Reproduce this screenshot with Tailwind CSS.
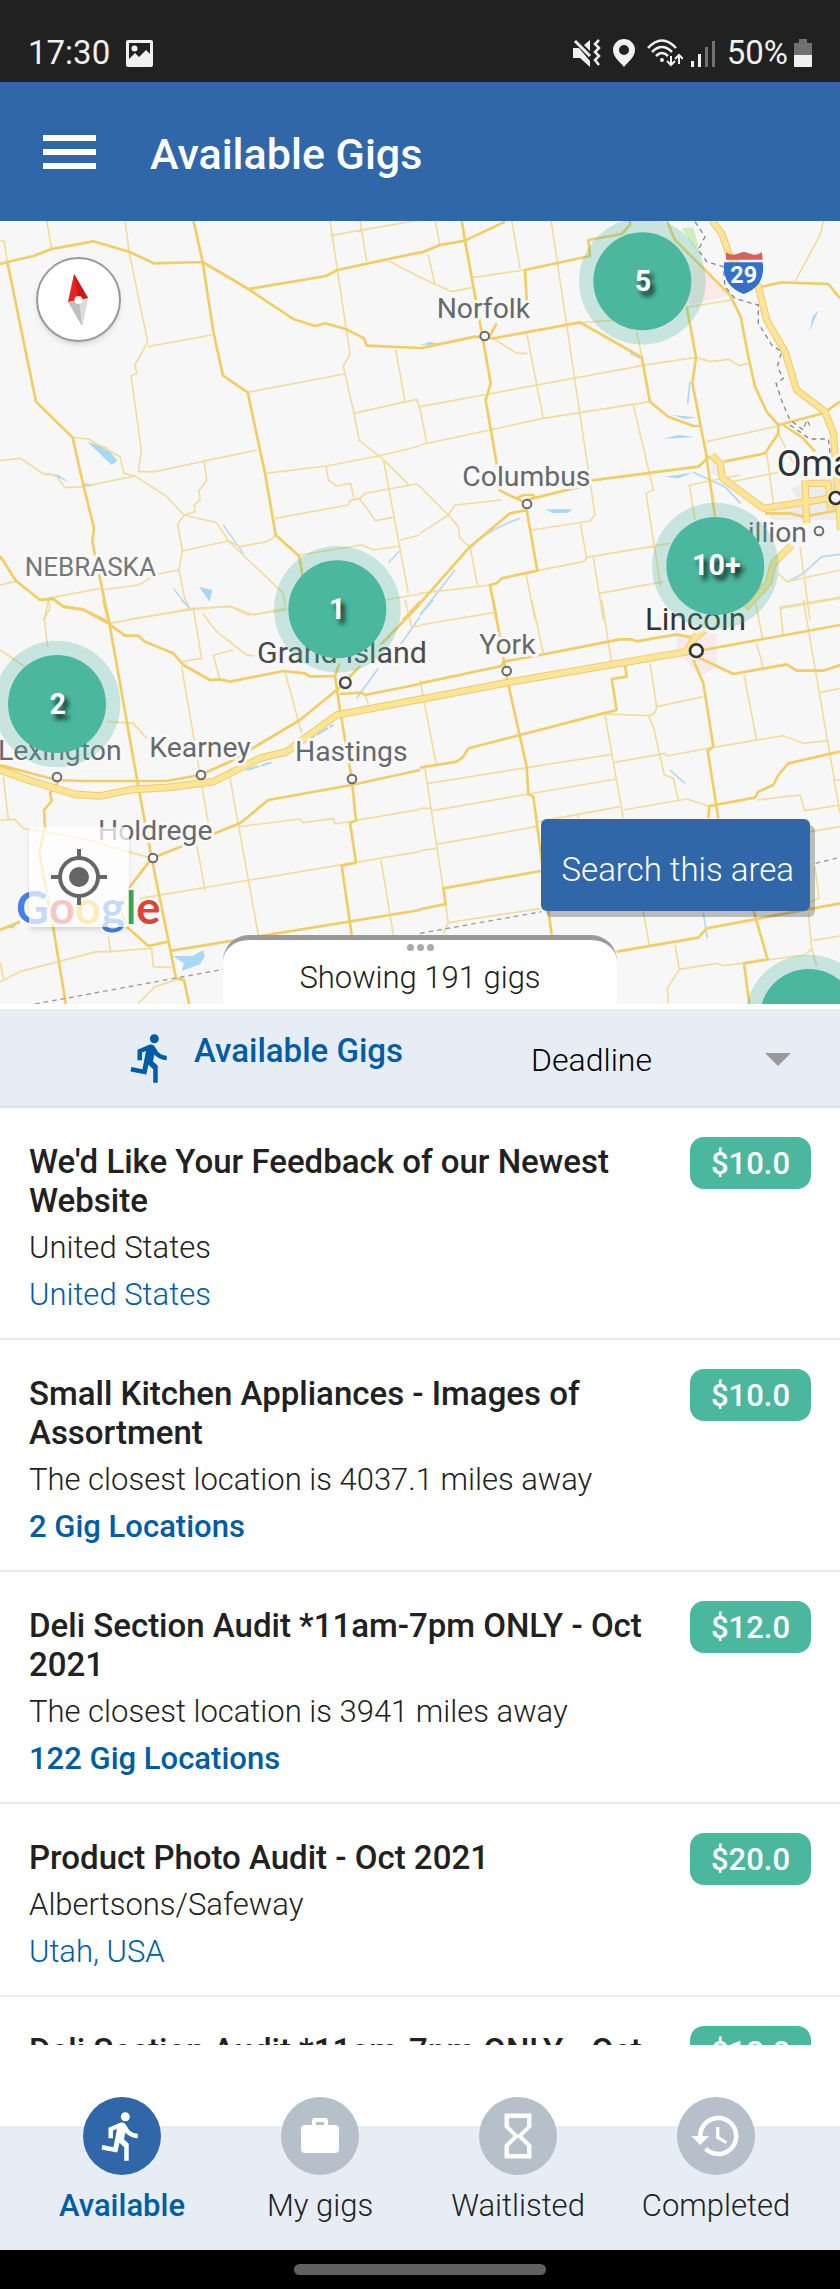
<!DOCTYPE html>
<html lang="en">
<head>
    <meta charset="UTF-8">
    <meta name="viewport" content="width=device-width, initial-scale=1.0">
    <title>Available Gigs</title>
    <script src="https://cdn.jsdelivr.net/npm/@tailwindcss/browser@4"></script>
</head>
<body class="flex h-screen flex-col bg-white font-['Roboto',sans-serif] text-[#212121]">

    <!-- Status bar -->
    <div class="flex h-[82px] shrink-0 items-end justify-between bg-[#212121] px-7 pb-[9px] text-[33px] leading-10 text-[#f0f0f0]">
        <div class="flex items-center gap-4">
            <span>17:30</span>
            <svg class="h-[27px] w-[27px]" viewBox="0 0 27 27" fill="#f0f0f0"><path fill-rule="evenodd" d="M2 0h23a2 2 0 0 1 2 2v23a2 2 0 0 1-2 2H2a2 2 0 0 1-2-2V2a2 2 0 0 1 2-2zM3 3v16l6-6 4 4 7-7 4 4V3z"/><circle cx="8.500" cy="8.500" r="3"/></svg>
        </div>
        <div class="flex items-center gap-3">
            <svg class="h-7 w-7" viewBox="0 0 28 28" fill="#f0f0f0"><path d="M0 9h6l11 13v6L7 19H0zM17 1v11l-6-6z"/><path d="M2 2l15 15" stroke="#f0f0f0" stroke-width="3"/><path d="M26 1l-4 4 4 4-4 4 4 4-4 4 4 5" fill="none" stroke="#f0f0f0" stroke-width="2.500"/></svg>
            <svg class="h-7 w-[22px]" viewBox="0 0 22 28" fill="#f0f0f0"><path fill-rule="evenodd" d="M11 0a11 11 0 0 1 11 11c0 7-7 12-11 17C7 23 0 18 0 11A11 11 0 0 1 11 0zm0 6a5 5 0 1 0 0 10 5 5 0 0 0 0-10z"/></svg>
            <svg class="h-7 w-9" viewBox="0 0 36 28" fill="none" stroke="#f0f0f0" stroke-width="2.500"><path d="M1 9Q15-6 29 9M5 13q10-10 20 0M9 17q6-6 12 0"/><circle cx="15" cy="21" r="2" fill="#f0f0f0" stroke="none"/><path d="M24 17v9m-4-4l4 4 4-4M32 25v-9m-4 4l4-4 4 4" stroke-width="2"/></svg>
            <svg class="-ml-1 h-7 w-6" viewBox="0 0 24 28"><path d="M0 22h3v6H0zM7 15h3v13H7z" fill="#f0f0f0"/><path d="M14 8h3v20h-3zM21 2h3v26h-3z" fill="#707070"/></svg>
            <div class="flex items-center gap-[6px]">
                <span>50%</span>
                <svg class="h-7 w-[18px]" viewBox="0 0 18 28"><path d="M5 0h8v4h5v12H0V4h5z" fill="#707070"/><path d="M0 16h18v11a1 1 0 0 1-1 1H1a1 1 0 0 1-1-1z" fill="#f0f0f0"/></svg>
            </div>
        </div>
    </div>

    <!-- Header -->
    <header class="flex h-[139px] shrink-0 items-center gap-[54px] bg-[#3067a9] pl-[43px] text-white">
        <button type="button" aria-label="Menu" class="flex w-[53px] flex-col gap-2">
            <span class="h-[6px] w-full bg-white"></span>
            <span class="h-[6px] w-full bg-white"></span>
            <span class="h-[6px] w-full bg-white"></span>
        </button>
        <h1 class="pt-1 text-[43px] font-medium leading-[50px]">Available Gigs</h1>
    </header>

    <!-- Map -->
    <section class="relative h-[788px] shrink-0 overflow-hidden border-b-5 border-white bg-[#f7f7f7]">
        <svg class="h-full w-full" viewBox="0 0 2520 2349" preserveAspectRatio="xMidYMid slice">
            <!-- north west -->
            <g transform="translate(0 -3)" fill="none" stroke-linejoin="round">
                <path fill="#a8d8f8" d="M262 665L320 682 352 722 335 735zM250 790l40 5-30 6zM130 757l45 8 33 22-40-16zM597 1100l40 10-8 35z"/>
                <path stroke="#b4d7f8" stroke-width="4" d="M520 1105L570 1168M670 915L730 1000M1165 1028L1200 992"/>
                <path stroke="#f3dc9b" stroke-width="5" d="M140 0L155 87M0 63H12L22 126M375 0L387 95 443 365 405 435 410 460 393 467 424 690 415 755H465L770 690M443 380L635 345M218 653L265 657 360 710 372 760 405 768 500 830 552 885 650 908 685 962 720 980 800 965 827 948M0 722L62 715 130 762 168 767 195 803 250 800 405 768M612 720L620 780 597 812 600 840 583 855 585 875 552 885 533 912 547 990 537 1050 553 1130 570 1170M547 993L685 963 850 1120 855 1160M305 1110L415 1095 470 1063 537 1050M120 1140L300 1105M0 1095L48 1084M145 1140L150 1165 130 1200M390 1197L580 1168 690 1158 760 1185 860 1165M743 517L1032 462M990 0L1012 150 1050 402 1030 438 1062 580 1078 662 1150 718 1225 793M990 47L1260 0M1080 0L1100 125M1165 122L1260 172M1187 388L1215 545M1060 580L1250 538 1260 570M795 760L980 738 1135 708 1260 678M978 740L985 780 1010 798 1052 790 1062 835M825 895L1045 855 1050 842 1080 835 1095 820 1250 792 1260 800M1080 838L1127 902 1180 892M1150 718L1225 1120M900 1005L1085 975 1120 990 1200 978M1200 960L1260 945M1155 1140L1260 1122"/>
                <path stroke="#f2cd63" stroke-width="8" d="M0 132L22 126 100 108 155 87 280 64 387 95 462 130 608 126 745 207 880 297 945 318 975 310 1040 328 1092 355 1100 377 1260 384M22 126L108 545 218 653 250 795 282 925 277 965 328 1210M745 207L978 168 1012 150 1260 97M580 0L608 126 640 335 669 467 743 517 795 760 827 945 897 1008 912 1090M0 1008L48 1082 120 1140 158 1136 190 1160 248 1168 325 1205M1210 1200L1260 1145"/>
            </g>
            <!-- north east -->
            <g transform="translate(1260 -3)" fill="none" stroke-linejoin="round">
                <path fill="#cdeebd" d="M785 25L820 22 845 115z"/>
                <path fill="#fae9e7" d="M800 130L850 140 930 225 810 255z"/>
                <path fill="#ececee" d="M1112 805L1260 760V900H1050V870L1140 850zM870 700L905 780 875 760z"/>
                <path fill="#a8d8f8" d="M0 375l30-10 30 8zM375 868l25 12 45-2 12-10zM733 770l42 5 47-18-50 8zM725 657l50-12 50 6zM755 585l40 12 35-5zM1168 335l28-65-18 20z"/>
                <path stroke="#b4d7f8" stroke-width="5" d="M820 757L915 800 962 850M803 550L810 485M300 895Q200 930 150 985M0 1185L105 1050M1110 1082L1150 1060 1205 1010 1260 1003M630 400L660 415"/>
                <path stroke="#f3dc9b" stroke-width="5" d="M45 0L60 75M275 0L300 145M160 172L315 150M25 105L45 195M0 172L95 215 155 203M393 0L525 885 510 903 335 930M0 560L650 440 665 436 830 412 870 425 925 418 960 437 985 430M225 358L290 400H322M320 340L370 595M0 675L370 595 690 545M0 565L20 668M640 555L700 810 678 820 722 1100M650 335L670 430M480 308L600 300M800 262L935 240M860 665L1075 618M1075 640L1120 730M1040 700L1060 850M1125 185L1200 45 1212 0M0 800L85 885 105 855 245 840M0 940L85 885 115 920 120 955 150 980 172 1095M0 1120L210 1095M480 905L500 1015 490 1025 352 1052M500 1012L750 970M520 1012L550 1200M540 1120L730 1085M318 1062L345 1200M825 900L808 795 960 765M1075 1060L1100 1085 1260 1050M1140 980L1170 1200M1080 1165L1260 1135M910 790L1110 750"/>
                <path stroke="#f2cd63" stroke-width="8" d="M0 100L60 75 135 62 255 5M125 0L135 62 187 348 212 490 197 540 235 760 240 812 320 850M230 310L205 355M0 385L165 350 220 355 480 307 600 375 665 412 690 545 745 590 820 618H840M320 240L315 150 510 108 505 60 605 42 630 15V0M740 0L765 60 845 140 930 225 962 290 985 410 1005 500 1040 575 1075 615V640L1035 700 912 725M800 260L828 412 817 490 858 700 885 890M320 840L480 800 510 782 835 740 870 708M290 835L310 825H340L345 838M1075 615L1210 580 1260 545M1090 615L1150 655 1185 695M1025 200L1085 187 1225 192 1260 235M320 870L270 880 150 980 0 1150M320 870L352 1052 245 1075 230 1090 210 1095 230 1200M1035 880L1110 880 1150 890 1260 870"/>
                <path stroke="#eccb72" stroke-width="22" d="M875 0L905 40 930 110 1015 200 1040 300 1095 395 1130 510 1215 575 1240 640 1262 930M875 705L900 730 908 775 1030 865 1260 830M1155 780L1160 910M1115 975L1060 1030 1045 1090 975 1165M1165 790H1225L1232 870"/>
                <path stroke="#fee596" stroke-width="16" d="M875 0L905 40 930 110 1015 200 1040 300 1095 395 1130 510 1215 575 1240 640 1262 930M875 705L900 730 908 775 1030 865 1260 830M1155 780L1160 910M1115 975L1060 1030 1045 1090 975 1165M1165 790H1225L1232 870"/>
                <path stroke="#85888c" stroke-width="4" stroke-dasharray="14 12" d="M825 5L855 50 835 90 860 125 910 140 915 200 945 235 995 250 1015 255V310L1055 375 1085 395 1072 440 1090 475 1068 490 1088 550 1110 600 1150 630 1160 600 1175 625M1110 615L1170 657H1225L1230 700"/>
                <path fill="#d8605f" d="M918 97Q935 108 950 102L972 95 993 102Q1010 108 1026 97L1028 119H918z"/>
                <path fill="#3570c8" d="M913 127H1028C1034 170 1020 205 971 222 925 205 906 170 913 127z"/>
                <text x="971" y="190" fill="#fff" font-size="70" font-weight="700" text-anchor="middle">29</text>
            </g>
            <!-- south west -->
            <g transform="translate(0 1137)" fill="none" stroke-linejoin="round">
                <path fill="#a8d8f8" d="M518 1068H578L610 1050 614 1070 600 1093 545 1113 552 1090zM0 985L55 968 40 985z"/>
                <path stroke="#b4d7f8" stroke-width="5" d="M1260 50L1180 165M1135 205L1070 295M545 0L570 25"/>
                <path stroke="#a8d8f8" stroke-width="6" stroke-dasharray="40 6" d="M910 428L1000 375M740 510L815 487"/>
                <path stroke="#f3dc9b" stroke-width="5" d="M145 0L133 60 143 140M0 150L90 210M330 70L580 25 690 20 745 45 860 30M580 25L605 175 545 185M608 40L650 95 740 165 765 168M700 150L640 165 660 240M545 200L630 700M855 215L905 400M320 365L400 370 440 415M0 660L45 658 70 685 245 715 455 775M10 530L25 658M590 735L615 870M690 535L775 1005M420 895L1260 755M715 680L900 657 910 668 1000 655 1005 672 1260 628M0 1145L60 1115 290 1055H330L455 1045 460 1100 515 1103M325 1010L332 1052M0 1085L12 1140M415 1210L465 1160 528 1140M1143 780L1180 1005M1095 285L1105 310M1215 0L1235 80 1260 78"/>
                <path stroke="#f2cd63" stroke-width="8" d="M120 0L158 -4 190 20 248 28 325 70 375 107H415L435 125 520 160 550 195 630 240 660 238 690 245 850 213 915 220 930 230 1005 228M310 0L328 70 415 560 455 775 528 1135 552 1140 568 1215M0 495L170 540 250 543H500L600 525 690 485 900 360 1035 250M1018 190L1005 228 1020 330 1055 535 1068 662 1050 668 1068 788 1025 797 1055 1005M1020 282L1085 278 1095 285 1260 252M1260 510L1055 555 805 600 720 670 455 775 390 860 360 930 385 985 445 1038 505 1025M515 1052L1260 930M175 545L150 580 155 603 132 630 135 680 118 760 160 985 198 1215M0 990L60 965M1040 240L1260 12"/>
                <path stroke="#eccb72" stroke-width="23" d="M-5 508L100 545 225 583 300 588 400 568 500 563 640 545 780 475 860 455 1010 345 1265 297"/>
                <path stroke="#fee596" stroke-width="17" d="M-5 508L100 545 225 583 300 588 400 568 500 563 640 545 780 475 860 455 1010 345 1265 297"/>
                <path stroke="#9a9a9a" stroke-width="4" stroke-dasharray="14 12" d="M105 1212L670 1108"/>
            </g>
            <!-- south east -->
            <g transform="translate(1260 1137)" fill="none" stroke-linejoin="round">
                <path fill="#f6ebea" d="M770 105L890 100V200L840 230 770 150z"/>
                <path stroke="#b4d7f8" stroke-width="5" d="M750 510L795 550M850 940L862 1015M0 45L40 0"/>
                <path stroke="#f3dc9b" stroke-width="5" d="M0 75L220 38M335 0L370 160M545 0L575 190M0 240L48 490M25 550L320 503 575 463M15 505L85 968M38 632L325 582 590 537M0 625H35M555 345L610 655M580 488L735 460 740 468 880 442 1090 407 1150 430 1222 422M555 342L685 347Q708 345 710 320L850 290M690 190L710 320M685 347L700 380 733 525 760 535 775 600M610 630L800 597 865 618M48 733L350 680M0 752L48 745M355 665L600 620M475 640V655M972 225L1010 420M1010 130L1030 205M1005 0L1028 115M1090 105L1080 22 1260 -8M1150 0L1260 640M1198 278L1260 265M1245 540H1260M1010 600L1140 585 1155 632 1260 615M1170 695L1260 680M1185 800L1197 895 1170 905M70 1000L85 968 365 925M670 935L688 1035M765 1035L778 1108 742 1165 745 1210M778 1108L890 1090 910 1097 1155 1065 1175 1045 1165 940M1175 1045L1190 1100M1178 1022L1260 1008"/>
                <path stroke="#f2cd63" stroke-width="8" d="M0 250L245 198 250 185 360 165 600 118H635L650 124 770 103 830 115M220 0L262 240 320 500 325 582 340 590 395 1005M615 195L620 230 575 237 590 330 550 340 300 405 145 445 130 470 110 485 0 503M830 170L940 222 1100 193 1130 212H1210L1260 195M850 150L1260 75M820 180L850 250 880 440 863 452 895 655M865 655L868 618 1005 593 1015 575 1060 555 1075 525 1105 490 1260 455M0 928L77 912 70 865 362 813M590 1055L835 1013 860 985 1260 910M1000 930L1043 1078 972 1090 988 1212"/>
                <path stroke="#eccb72" stroke-width="23" d="M-5 299L260 248 800 155 825 112 870 75"/>
                <path stroke="#fee596" stroke-width="17" d="M-5 299L260 248 800 155 825 112 870 75"/>
                <path stroke="#9a9a9a" stroke-width="4" stroke-dasharray="14 12" d="M0 1000L365 935M1187 790L1260 772"/>
            </g>
            <!-- town markers -->
            <g fill="#f7f7f7" stroke="#6b6b6b" stroke-width="6">
                <circle cx="1454" cy="345" r="13"/>
                <circle cx="1581" cy="849" r="13"/>
                <circle cx="2457" cy="930" r="13"/>
                <circle cx="171" cy="1668" r="13"/>
                <circle cx="603" cy="1662" r="13"/>
                <circle cx="1056" cy="1674" r="13"/>
                <circle cx="459" cy="1911" r="13"/>
                <circle cx="1520" cy="1350" r="13"/>
                <circle cx="1036" cy="1385" r="16" stroke="#444" stroke-width="7"/>
                <circle cx="2089" cy="1289" r="19" stroke="#333" stroke-width="8"/>
                <circle cx="2507" cy="831" r="18" stroke="#333" stroke-width="8"/>
            </g>
            <!-- place names -->
            <g fill="#66696c" stroke="#f9f9f9" stroke-width="18" stroke-linejoin="round" paint-order="stroke" font-size="85">
                <text x="1310" y="291">Norfolk</text>
                <text x="1387" y="795">Columbus</text>
                <text x="2421" y="962" text-anchor="end">Papillion</text>
                <text x="74" y="1065" font-size="78" fill="#73787a">NEBRASKA</text>
                <text x="-6" y="1616">Lexington</text>
                <text x="448" y="1607">Kearney</text>
                <text x="885" y="1620">Hastings</text>
                <text x="294" y="1858">Holdrege</text>
                <text x="1438" y="1298">York</text>
                <text x="771" y="1326" font-size="91" fill="#4a4a4a">Grand Island</text>
                <text x="1935" y="1228" font-size="94" fill="#333">Lincoln</text>
                <text x="2330" y="764" font-size="108" fill="#333">Omaha</text>
            </g>
            <text x="48" y="2110" font-family="Lato, sans-serif" font-size="136" font-weight="700" stroke="#fff" stroke-width="10" paint-order="stroke"><tspan fill="#4580e6">G</tspan><tspan fill="#dd4338">o</tspan><tspan fill="#f5bd1c">o</tspan><tspan fill="#4580e6">g</tspan><tspan fill="#3fa654">l</tspan><tspan fill="#dd4338">e</tspan></text>
            <!-- gig clusters -->
            <g fill="#4bb79e">
                <g fill-opacity=".28">
                    <circle cx="1927" cy="181" r="190"/>
                    <circle cx="2146" cy="1035" r="190"/>
                    <circle cx="1012" cy="1165" r="190"/>
                    <circle cx="171" cy="1449" r="190"/>
                    <circle cx="2426" cy="2391" r="190"/>
                </g>
                <circle cx="1927" cy="181" r="147"/>
                <circle cx="2146" cy="1035" r="147"/>
                <circle cx="1012" cy="1165" r="147"/>
                <circle cx="171" cy="1449" r="147"/>
                <circle cx="2426" cy="2391" r="147"/>
            </g>
            <g class="[text-shadow:4px_5px_5px_#000c]" fill="#fff" font-size="86" font-weight="700" text-anchor="middle">
                <text x="1929" y="209">5</text>
                <text x="2149" y="1063">10+</text>
                <text x="1012" y="1195">1</text>
                <text x="173" y="1479">2</text>
            </g>
        </svg>

        <button type="button" aria-label="Compass" class="absolute left-9 top-9 h-[85px] w-[85px] rounded-full border-2 border-[#999] bg-white shadow-md">
            <svg class="h-full w-full" viewBox="0 0 81 81"><path fill="#ec2121" d="M36 15L50 39 30 43z"/><path fill="#cf1717" d="M36 15L50 39 41 42z"/><path fill="#bfbfbf" d="M30 43L50 39 44 67z"/><path fill="#dcdcdc" d="M41 42L50 39 44 67z"/><circle cx="40.500" cy="41" r="4" fill="#fff"/></svg>
        </button>
        <button type="button" aria-label="My location" class="absolute bottom-[77px] left-[29px] flex h-[100px] w-[100px] items-center justify-center rounded-xs bg-white/70 shadow-md">
            <svg class="h-14 w-14" viewBox="0 0 56 56" fill="none" stroke="#666" stroke-width="4"><circle cx="28" cy="28" r="19" fill="#fff"/><circle cx="28" cy="28" r="10" fill="#666" stroke="none"/><path d="M28 0v9M28 47v9M0 28h9M47 28h9"/></svg>
        </button>
        <button type="button" class="absolute bottom-[93px] right-[30px] h-[92px] rounded-md bg-[#3067a9] pl-[21px] pr-4 pt-[10px] text-[33px] font-light text-white shadow-[5px_6px_0_#0000003d]">Search this area</button>

        <div class="absolute inset-x-0 bottom-0 mx-auto flex h-[69px] w-[394px] flex-col items-center rounded-t-[26px] border-t-5 border-[#999] bg-white">
            <div class="mt-1 flex gap-[3px]">
                <span class="h-[7px] w-[7px] rounded-full bg-[#aaa]"></span>
                <span class="h-[7px] w-[7px] rounded-full bg-[#aaa]"></span>
                <span class="h-[7px] w-[7px] rounded-full bg-[#aaa]"></span>
            </div>
            <p class="pt-[7px] text-[31px] font-light leading-[39px]">Showing 191 gigs</p>
        </div>
    </section>

    <!-- Sort bar -->
    <div class="flex h-[99px] shrink-0 items-start justify-between border-b-2 border-[#d9e3ec] bg-[#e7edf5] pl-[124px] pr-[49px]">
        <div class="flex gap-4 pt-[22px] text-[#005ca5]">
            <svg class="h-[54px] w-[54px]" viewBox="0 0 24 24" fill="currentColor"><path d="M13.490 5.480c1.100 0 2-.9 2-2s-.9-2-2-2-2 .9-2 2 .9 2 2 2zm-3.600 13.900l1-4.400 2.100 2v6h2v-7.500l-2.100-2 .6-3c1.300 1.500 3.300 2.500 5.500 2.500v-2c-1.900 0-3.500-1-4.300-2.400l-1-1.600c-.4-.6-1-1-1.700-1-.3 0-.5.1-.8.1l-5.200 2.200v4.700h2v-3.400l1.800-.7-1.600 8.100-4.900-1-.4 2 7 1.400z"/></svg>
            <h2 class="text-[33px] font-medium leading-[39px]">Available Gigs</h2>
        </div>
        <div class="relative flex h-[97px] w-[260px] items-center pt-1">
            <select aria-label="Sort by" class="w-full appearance-none bg-transparent text-[32px] font-light text-black">
                <option>Deadline</option>
                <option>Distance</option>
            </select>
            <svg class="pointer-events-none absolute right-0 h-[13px] w-[26px]" viewBox="0 0 26 13"><path d="M0 0h26L13 13z" fill="#999"/></svg>
        </div>
    </div>

    <!-- Gig list -->
    <ul class="min-h-0 flex-1 overflow-y-auto [scrollbar-width:none]">
        <li class="flex items-start justify-between border-b-2 border-[#e3edf0] px-[29px] pb-5">
            <div class="w-[620px] pt-[34px]">
                <h3 class="text-[33px] font-medium leading-[39px]">We'd Like Your Feedback of our Newest Website</h3>
                <p class="mt-1 text-[31px] font-light leading-[47px]">United States</p>
                <a href="#" class="block text-[31px] font-light leading-[47px] text-[#005ca5]">United States</a>
            </div>
            <span class="mt-[29px] h-[52px] w-[121px] rounded-[14px] bg-[#4bb79e] text-center text-[31px] font-medium leading-[54px] text-white">$10.0</span>
        </li>
        <li class="flex items-start justify-between border-b-2 border-[#e3edf0] px-[29px] pb-5">
            <div class="w-[620px] pt-[34px]">
                <h3 class="text-[33px] font-medium leading-[39px]">Small Kitchen Appliances - Images of Assortment</h3>
                <p class="mt-1 text-[31px] font-light leading-[47px]">The closest location is 4037.1 miles away</p>
                <a href="#" class="block text-[31px] font-medium leading-[47px] text-[#005ca5]">2 Gig Locations</a>
            </div>
            <span class="mt-[29px] h-[52px] w-[121px] rounded-[14px] bg-[#4bb79e] text-center text-[31px] font-medium leading-[54px] text-white">$10.0</span>
        </li>
        <li class="flex items-start justify-between border-b-2 border-[#e3edf0] px-[29px] pb-5">
            <div class="w-[620px] pt-[34px]">
                <h3 class="text-[33px] font-medium leading-[39px]">Deli Section Audit *11am-7pm ONLY - Oct 2021</h3>
                <p class="mt-1 text-[31px] font-light leading-[47px]">The closest location is 3941 miles away</p>
                <a href="#" class="block text-[31px] font-medium leading-[47px] text-[#005ca5]">122 Gig Locations</a>
            </div>
            <span class="mt-[29px] h-[52px] w-[121px] rounded-[14px] bg-[#4bb79e] text-center text-[31px] font-medium leading-[54px] text-white">$12.0</span>
        </li>
        <li class="flex items-start justify-between border-b-2 border-[#e3edf0] px-[29px] pb-5">
            <div class="w-[620px] pt-[34px]">
                <h3 class="text-[33px] font-medium leading-[39px]">Product Photo Audit - Oct 2021</h3>
                <p class="mt-1 text-[31px] font-light leading-[47px]">Albertsons/Safeway</p>
                <a href="#" class="block text-[31px] font-light leading-[47px] text-[#005ca5]">Utah, USA</a>
            </div>
            <span class="mt-[29px] h-[52px] w-[121px] rounded-[14px] bg-[#4bb79e] text-center text-[31px] font-medium leading-[54px] text-white">$20.0</span>
        </li>
        <li class="flex items-start justify-between border-b-2 border-[#e3edf0] px-[29px] pb-5">
            <div class="w-[620px] pt-[34px]">
                <h3 class="text-[33px] font-medium leading-[39px]">Deli Section Audit *11am-7pm ONLY - Oct</h3>
            </div>
            <span class="mt-[29px] h-[52px] w-[121px] rounded-[14px] bg-[#4bb79e] text-center text-[31px] font-medium leading-[54px] text-white">$12.0</span>
        </li>
    </ul>

    <!-- Bottom navigation -->
    <nav class="mt-[81px] grid h-[124px] shrink-0 grid-cols-4 bg-[#e7edf5] pl-[23px] pr-[25px] text-[31px] font-light leading-9">
        <a href="#" class="-mt-[29px] flex flex-col items-center gap-[13px] font-medium text-[#005ca5]">
            <span class="flex h-[78px] w-[78px] items-center justify-center rounded-full bg-[#3067a9]">
                <svg class="h-[54px] w-[54px]" viewBox="0 0 24 24" fill="#fff"><path d="M13.490 5.480c1.100 0 2-.9 2-2s-.9-2-2-2-2 .9-2 2 .9 2 2 2zm-3.600 13.900l1-4.400 2.100 2v6h2v-7.500l-2.100-2 .6-3c1.300 1.500 3.300 2.500 5.500 2.500v-2c-1.900 0-3.500-1-4.300-2.400l-1-1.600c-.4-.6-1-1-1.700-1-.3 0-.5.1-.8.1l-5.200 2.200v4.700h2v-3.400l1.800-.7-1.600 8.100-4.900-1-.4 2 7 1.400z"/></svg>
            </span>
            Available
        </a>
        <a href="#" class="-mt-[29px] flex flex-col items-center gap-[13px]">
            <span class="flex h-[78px] w-[78px] items-center justify-center rounded-full bg-[#b6c0ca]">
                <svg class="h-[54px] w-[54px]" viewBox="0 0 54 54" fill="#fff"><path fill-rule="evenodd" d="M22 9h10a3 3 0 0 1 3 3v4h7a4 4 0 0 1 4 4v20a4 4 0 0 1-4 4H12a4 4 0 0 1-4-4V20a4 4 0 0 1 4-4h7v-4a3 3 0 0 1 3-3zm1 4v3h8v-3z"/></svg>
            </span>
            My gigs
        </a>
        <a href="#" class="-mt-[29px] flex flex-col items-center gap-[13px]">
            <span class="flex h-[78px] w-[78px] items-center justify-center rounded-full bg-[#b6c0ca]">
                <svg class="h-[54px] w-[54px]" viewBox="0 0 24 24" fill="#fff"><path d="M6 2v6h.01L6 8.010 10 12l-4 4 .01.01H6V22h12v-5.990h-.01L18 16l-4-4 4-3.990-.01-.01H18V2H6zm10 14.500V20H8v-3.500l4-4 4 4zm-4-5l-4-4V4h8v3.500l-4 4z"/></svg>
            </span>
            Waitlisted
        </a>
        <a href="#" class="-mt-[29px] flex flex-col items-center gap-[13px]">
            <span class="flex h-[78px] w-[78px] items-center justify-center rounded-full bg-[#b6c0ca]">
                <svg class="h-[54px] w-[54px]" viewBox="0 0 24 24" fill="#fff"><path d="M13 3c-4.970 0-9 4.030-9 9H1l3.890 3.890.07.14L9 12H6c0-3.870 3.130-7 7-7s7 3.130 7 7-3.130 7-7 7c-1.930 0-3.680-.79-4.940-2.060l-1.420 1.420C8.270 19.990 10.510 21 13 21c4.970 0 9-4.030 9-9s-4.030-9-9-9zm-1 5v5l4.280 2.540.72-1.210-3.500-2.080V8H12z"/></svg>
            </span>
            Completed
        </a>
    </nav>

    <!-- Gesture bar -->
    <div class="flex h-[39px] shrink-0 items-center justify-center bg-black">
        <span class="h-[11px] w-[252px] rounded-full bg-[#606060]"></span>
    </div>

</body>
</html>
